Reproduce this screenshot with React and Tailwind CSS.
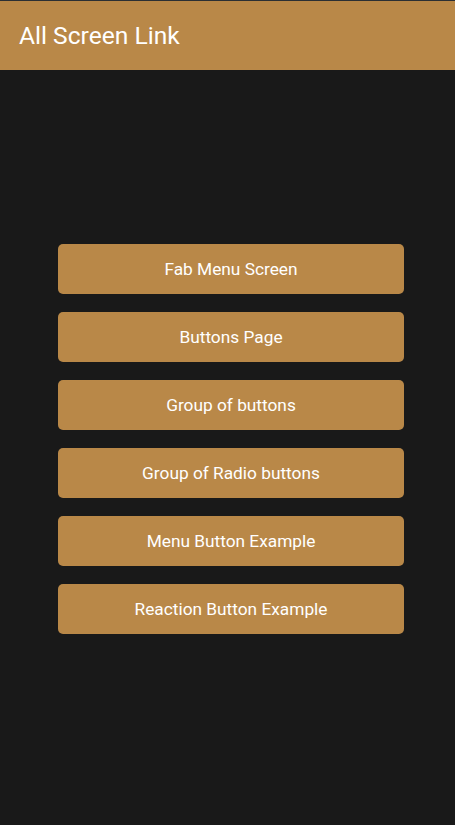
export default function App() {
  const items = [
    "Fab Menu Screen",
    "Buttons Page",
    "Group of buttons",
    "Group of Radio buttons",
    "Menu Button Example",
    "Reaction Button Example",
  ];
  return (
    <div className="w-[455px] h-[825px] bg-[#191919] flex flex-col" style={{ fontFamily: "Roboto, 'Liberation Sans', sans-serif" }}>
      <div className="h-px bg-[#2b2f33]" />
      <div className="h-[69px] bg-[#b98848] flex items-center pl-[19px]">
        <span className="text-white text-[24.6px] leading-none pt-[1px]">All Screen Link</span>
      </div>
      <div className="flex flex-col gap-[18px] pt-[174px] pl-[58px]">
        {items.map((t) => (
          <div key={t} className="w-[346px] h-[50px] rounded-[5px] bg-[#b98848] flex items-center justify-center text-white text-[17.3px] pt-[2px]">
            {t}
          </div>
        ))}
      </div>
    </div>
  );
}
